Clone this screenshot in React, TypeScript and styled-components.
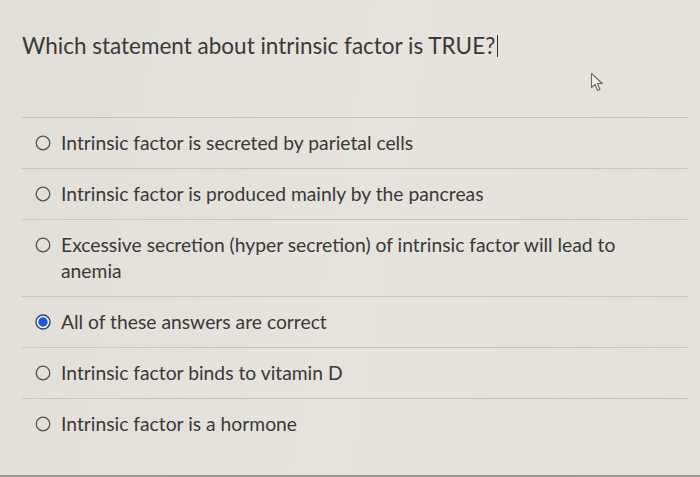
import React from "react";
import styled, { createGlobalStyle } from "styled-components";

const Global = createGlobalStyle`
  html, body { margin: 0; padding: 0; }
  body {
    background: #e4e0da;
    font-family: Lato, "Liberation Sans", sans-serif;
    color: #3b3a39;
  }
`;

const Page = styled.div`
  position: relative;
  width: 700px;
  height: 477px;
  box-sizing: border-box;
  padding: 0 12px 0 22px;
  background: linear-gradient(100deg, #e2ded8 0%, #e6e2dc 50%, #e4e0da 100%);
  border-bottom: 2px solid #9a9691;
  overflow: hidden;
`;

const Header = styled.div`
  height: 118px;
  padding-top: 31px;
  box-sizing: border-box;
  border-bottom: 1px solid #c4c0ba;
`;

const Title = styled.h1`
  margin: 0;
  font-size: 22.5px;
  line-height: 30px;
  font-weight: 400;
  color: #3a3938;
  display: flex;
  align-items: center;
`;

const Caret = styled.span`
  display: inline-block;
  width: 1px;
  height: 22px;
  margin-left: 2px;
  background: #333;
`;

const List = styled.div`
  display: flex;
  flex-direction: column;
`;

const Row = styled.label`
  display: flex;
  align-items: flex-start;
  gap: 10px;
  padding: 12px 0 12px 13px;
  border-bottom: 1px solid #c8c4be;
  font-size: 19.3px;
  line-height: 26px;
  color: #3a3938;
  &:last-child { border-bottom: none; }
`;

const RadioWrap = styled.span`
  flex: none;
  width: 16px;
  height: 26px;
  display: flex;
  align-items: center;
`;

const Text = styled.span`
  max-width: 570px;
`;

const Pointer = styled.svg`
  position: absolute;
  left: 590px;
  top: 72px;
`;

function Radio({ checked }: { checked?: boolean }) {
  return (
    <RadioWrap>
      <svg width="16" height="16" viewBox="0 0 16 16">
        {checked ? (
          <>
            <circle cx="8" cy="8" r="7" fill="#f4f5f8" stroke="#33407a" strokeWidth="1.4" />
            <circle cx="8" cy="8" r="4.7" fill="#1e5ad6" />
          </>
        ) : (
          <circle cx="8" cy="8" r="6.8" fill="none" stroke="#55544f" strokeWidth="1.3" />
        )}
      </svg>
    </RadioWrap>
  );
}

const options = [
  { text: "Intrinsic factor is secreted by parietal cells" },
  { text: "Intrinsic factor is produced mainly by the pancreas" },
  { text: "Excessive secretion (hyper secretion) of intrinsic factor will lead to anemia" },
  { text: "All of these answers are correct", checked: true },
  { text: "Intrinsic factor binds to vitamin D" },
  { text: "Intrinsic factor is a hormone" },
];

export default function App() {
  return (
    <>
      <Global />
      <Page>
        <Header>
          <Title>
            Which statement about intrinsic factor is TRUE?<Caret />
          </Title>
        </Header>
        <List>
          {options.map((o) => (
            <Row key={o.text}>
              <Radio checked={o.checked} />
              <Text>{o.text}</Text>
            </Row>
          ))}
        </List>
        <Pointer width="16" height="22" viewBox="0 0 16 22">
          <path
            d="M1.5 1.5 L1.5 15.5 L5 12.3 L7.6 18.5 L10 17.5 L7.5 11.5 L12.3 11.5 Z"
            fill="#f3f1ee"
            stroke="#6c6a66"
            strokeWidth="1.1"
            strokeLinejoin="round"
          />
        </Pointer>
      </Page>
    </>
  );
}
